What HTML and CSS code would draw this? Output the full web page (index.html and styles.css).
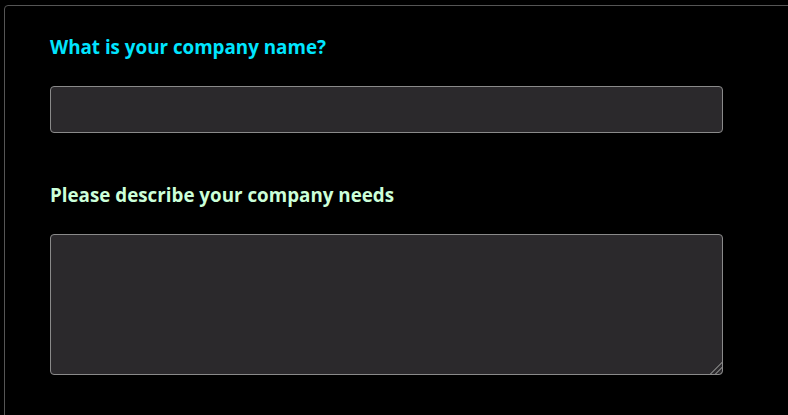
FILE: index.html
```html
<!DOCTYPE html>
<html lang="en">
<head>
    <meta charset="UTF-8">
    <meta name="viewport" content="width=device-width, initial-scale=1.0">
    <title>Company Form</title>
    <link rel="stylesheet" href="styles.css">
</head>
<body>
    <div class="form-box">
        <label class="question question-name" for="companyName">What is your company name?</label>
        <input type="text" id="companyName" class="field">

        <label class="question question-needs" for="companyNeeds">Please describe your company needs</label>
        <textarea id="companyNeeds" class="field field-area"></textarea>
    </div>
</body>
</html>
```

FILE: styles.css
```css
html, body {
    height: 100%;
    overflow: hidden;
}

body {
    font-family: 'Open Sans', 'Noto Sans', sans-serif;
    background-color: #000;
    margin: 0;
    padding: 0;
    color-scheme: dark;
}

.form-box {
    margin: 5px 0 0 4px;
    width: 820px;
    height: 420px;
    border: 1px solid #555;
    border-radius: 4px;
    padding: 0 45px;
    box-sizing: border-box;
}

.question {
    display: block;
    font-size: 18.8px;
    font-weight: bold;
    line-height: 24px;
}

.question-name {
    color: #00e5ff;
    margin-top: 29px;
}

.question-needs {
    color: #ccffd9;
    margin-top: 50px;
}

.field {
    display: block;
    width: 673px;
    height: 47px;
    margin-top: 27px;
    box-sizing: border-box;
    background-color: #2b292c;
    border: 1px solid #8a8a8a;
    border-radius: 4px;
    color: #eee;
    font-family: inherit;
    font-size: 16px;
    padding: 8px 10px;
    outline: none;
}

.field-area {
    height: 141px;
    resize: vertical;
}

/* grip in the corner, drawn as a triangle of stripes */
.field-area::-webkit-resizer {
    background:
        linear-gradient(135deg, #2b292c 52%, transparent 52%),
        repeating-linear-gradient(135deg,
            transparent 0, transparent 2px,
            #6e6e6e 2px, #6e6e6e 3.5px);
}
```
